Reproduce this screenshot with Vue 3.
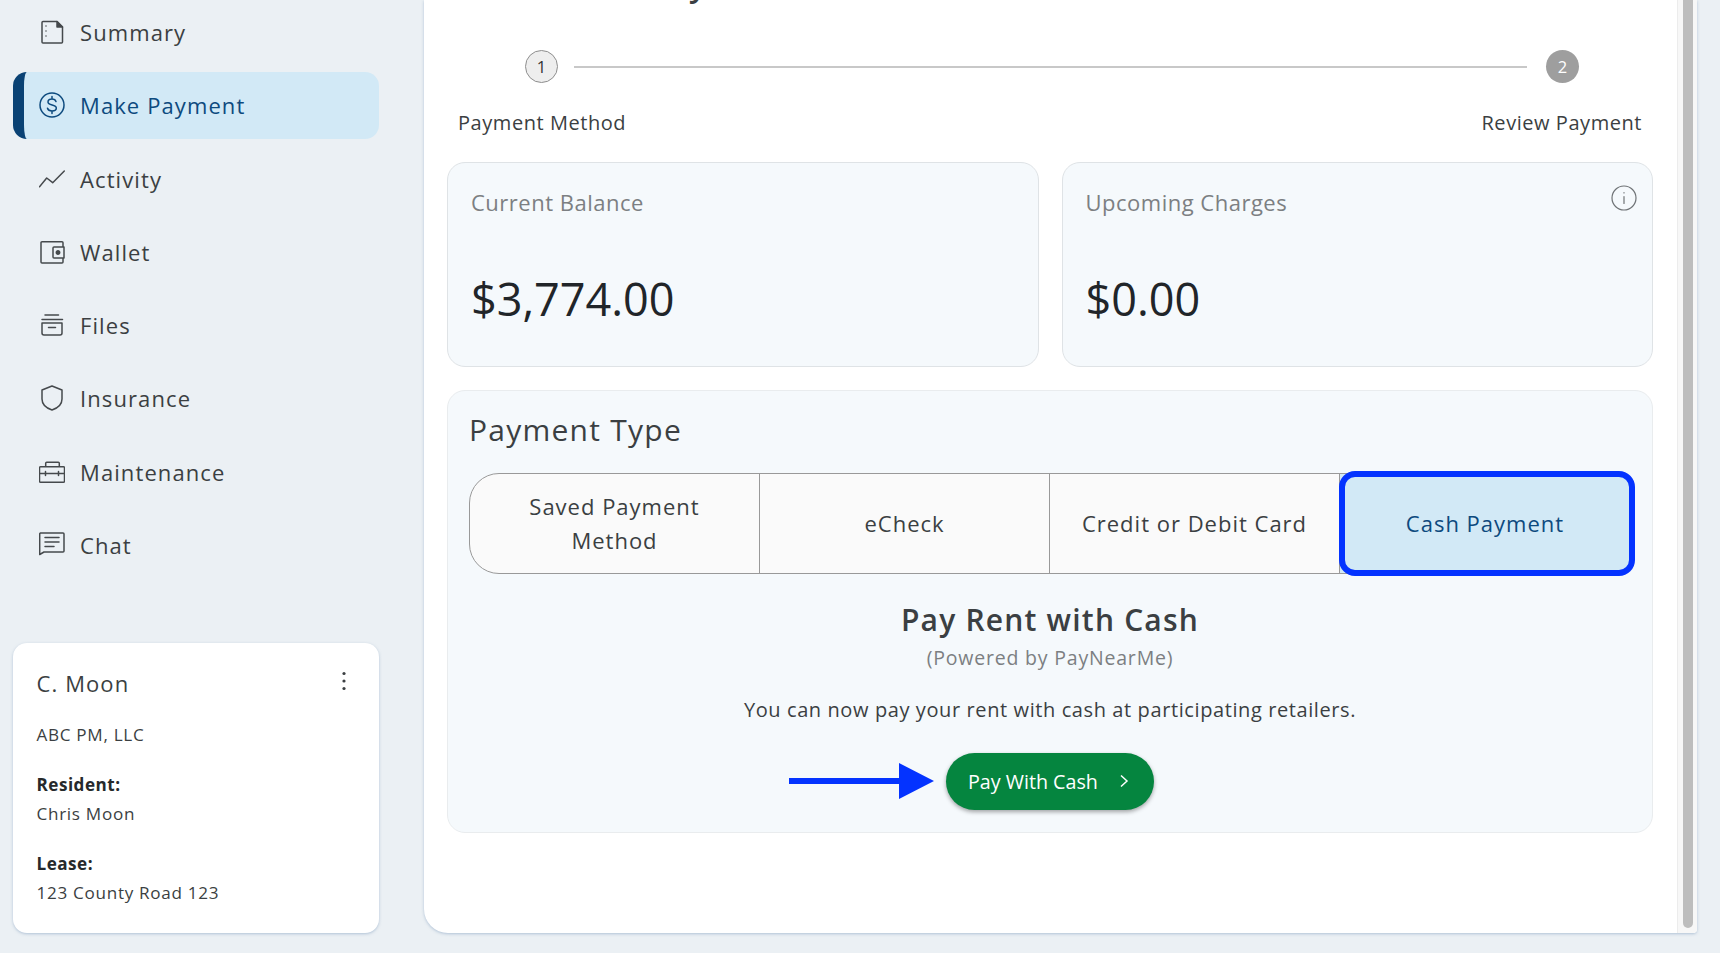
<script setup>
const navItems = [
  { label: 'Summary', fill: 'M18 2.5L23.5 8H18z', icon: 'M4 2.5H18L23.5 8V23a1 1 0 0 1-1 1H4a1 1 0 0 1-1-1V3.5a1 1 0 0 1 1-1zM7 7v.1M7 12v.1M7 17v.1' },
  { label: 'Make Payment', active: true, icon: 'M1 13a12 12 0 1 0 24 0a12 12 0 1 0-24 0M17 9.6C16.5 8 15 7 13 7c-2.5 0-4 1.3-4 3c0 4 8.3 2 8.3 6c0 1.8-1.8 3-4.3 3c-2.3 0-4-1-4.5-2.7M13 4.5V7M13 19v2.5' },
  { label: 'Activity', icon: 'M.5 20.7L7.7 12L13.7 16.7L25.3 5' },
  { label: 'Wallet', fill: 'M17.3 13.5a1.7 1.7 0 1 0 3.4 0a1.7 1.7 0 1 0-3.4 0z', icon: 'M24 8V3.7a1 1 0 0 0-1-1H3a1 1 0 0 0-1 1V23a1 1 0 0 0 1 1H23a1 1 0 0 0 1-1V19M25 8H15a1 1 0 0 0-1 1V18a1 1 0 0 0 1 1H25z' },
  { label: 'Files', icon: 'M6 3H19.5M3 7.5H23.5M3 11H23V21a2 2 0 0 1-2 2H5a2 2 0 0 1-2-2zM9.5 15.5H16.5' },
  { label: 'Insurance', icon: 'M13 1L23 5V14c0 5-4 9-10 11c-6-2-10-6-10-11V5z' },
  { label: 'Maintenance', icon: 'M1.5 7.7H24.5a1 1 0 0 1 1 1V22.3a1 1 0 0 1-1 1H1.5a1 1 0 0 1-1-1V8.7a1 1 0 0 1 1-1zM6.7 7.7V4.3a1 1 0 0 1 1-1H19.3a1 1 0 0 1 1 1V7.7M.5 14.5H25.5M6.5 12.5V16.5M19.5 12.5V16.5' },
  { label: 'Chat', icon: 'M1.5 1H24a1 1 0 0 1 1 1V19a1 1 0 0 1-1 1H5L.7 22.5V2A1 1 0 0 1 1.5 1zM6 5.5H20M6 10H20M6 14.5H15' }
]
const tabs = ['Saved Payment Method', 'eCheck', 'Credit or Debit Card', 'Cash Payment']
</script>

<template>
  <div class="page">
    <aside class="sidebar">
      <nav class="nav">
        <a v-for="item in navItems" :key="item.label" class="nav-item" :class="{ active: item.active }">
          <svg class="nav-icon" width="26" height="26" viewBox="0 0 26 26" fill="none" stroke="currentColor" stroke-width="1.5" stroke-linecap="round" stroke-linejoin="round">
            <path :d="item.icon" />
            <path v-if="item.fill" :d="item.fill" fill="currentColor" />
          </svg>
          <span>{{ item.label }}</span>
        </a>
      </nav>
      <section class="account">
        <div class="account-head">
          <span class="account-name">C. Moon</span>
          <svg class="dots" width="6" height="20" viewBox="0 0 6 20" fill="#3b3f42">
            <circle cx="3" cy="2.5" r="1.6" />
            <circle cx="3" cy="10" r="1.6" />
            <circle cx="3" cy="17.5" r="1.6" />
          </svg>
        </div>
        <p class="account-line company">ABC PM, LLC</p>
        <p class="account-label">Resident:</p>
        <p class="account-line">Chris Moon</p>
        <p class="account-label">Lease:</p>
        <p class="account-line">123 County Road 123</p>
      </section>
    </aside>

    <main class="main">
      <div class="content">
        <h1 class="title">Make Payment</h1>
        <div class="stepper-track">
          <span class="step-dot current">1</span>
          <span class="step-line"></span>
          <span class="step-dot next">2</span>
        </div>
        <div class="stepper-labels">
          <span>Payment Method</span>
          <span>Review Payment</span>
        </div>

        <div class="balances">
          <div class="balance">
            <div class="balance-label">Current Balance</div>
            <div class="balance-value">$3,774.00</div>
          </div>
          <div class="balance">
            <div class="balance-label">Upcoming Charges</div>
            <div class="balance-value">$0.00</div>
            <svg class="info" width="26" height="26" viewBox="0 0 26 26" fill="none" stroke="#6f7376" stroke-width="1.2" stroke-linecap="round">
              <circle cx="13" cy="13" r="12" />
              <path d="M13 11.5V18.5M13 7.6v.3" />
            </svg>
          </div>
        </div>

        <section class="payment">
          <h2 class="payment-title">Payment Type</h2>
          <div class="tabs">
            <button v-for="(tab, i) in tabs" :key="tab" class="tab" :class="{ selected: i === 3 }">{{ tab }}</button>
            <span class="highlight"></span>
          </div>
          <h3 class="cash-title">Pay Rent with Cash</h3>
          <p class="powered">(Powered by PayNearMe)</p>
          <p class="cash-text">You can now pay your rent with cash at participating retailers.</p>
          <div class="action">
            <button class="pay">
              <span>Pay With Cash</span>
              <svg width="12" height="16" viewBox="0 0 12 16" fill="none" stroke="#fff" stroke-width="1.5">
                <path d="M3 2.5L9 8L3 13.5" />
              </svg>
            </button>
            <svg class="arrow" width="145" height="36" viewBox="0 0 145 36" fill="#0433ff">
              <path d="M0 15H110V0L145 18L110 36V21H0z" />
            </svg>
          </div>
        </section>
      </div>
      <div class="scrollbar"><span class="thumb"></span></div>
    </main>
  </div>
</template>

<style>
html, body { margin: 0; padding: 0; overflow: hidden; }
</style>

<style scoped>
.page {
  display: flex;
  height: 953px;
  box-sizing: border-box;
  padding-bottom: 20px;
  background: #ebf0f4;
  font-family: "Open Sans", "Noto Sans", sans-serif;
  color: #3b3f42;
  overflow: hidden;
}
.sidebar {
  width: 424px;
  flex: none;
  box-sizing: border-box;
  padding: 0 45px 0 13px;
  display: flex;
  flex-direction: column;
}
.nav {
  margin-top: -1.5px;
  display: flex;
  flex-direction: column;
  gap: 6.3px;
}
.nav-item {
  height: 67px;
  display: flex;
  align-items: center;
  gap: 15px;
  padding-left: 26px;
  font-size: 22px;
  letter-spacing: 1.1px;
  color: #3b3f42;
  border-radius: 14px;
  box-sizing: border-box;
}
.nav-icon { flex: none; color: #45494c; }
.nav-item.active {
  background: #d2e9f6;
  color: #0d4a7e;
  border-left: 11px solid #0a4274;
  padding-left: 15px;
}
.nav-item.active .nav-icon { color: #0d4a7e; }
.account {
  margin-top: auto;
  height: 290px;
  box-sizing: border-box;
  background: #fff;
  border-radius: 14px;
  padding: 23px 23.5px 0;
  box-shadow: 0 1px 3px rgba(120, 150, 185, 0.5);
}
.account-head {
  display: flex;
  justify-content: space-between;
  align-items: flex-start;
  height: 35px;
}
.account-name { font-size: 22px; letter-spacing: 1.1px; line-height: 34px; }
.dots { margin: 5px 8.5px 0 0; }
.account-line {
  margin: 0;
  font-size: 17.1px;
  letter-spacing: 0.7px;
  line-height: 29px;
}
.company { margin-top: 18.5px; margin-bottom: 22.5px; }
.account-label {
  margin: 0;
  font-size: 17.1px;
  letter-spacing: 0.5px;
  font-weight: 700;
  line-height: 28px;
  color: #26292b;
}
.account-line + .account-label { margin-top: 21.5px; }
.company + .account-label { margin-top: 0; }

.main {
  flex: 1;
  min-width: 0;
  margin-right: 23px;
  display: flex;
  background: #fff;
  border-radius: 0 0 4px 24px;
  box-shadow: 0 1px 3px rgba(120, 150, 185, 0.5);
  overflow: hidden;
}
.content {
  flex: 1;
  min-width: 0;
  box-sizing: border-box;
  padding: 0 24px 0 23px;
  overflow: hidden;
}
.scrollbar {
  flex: none;
  width: 20px;
  box-sizing: border-box;
  padding: 0 4px 5px 5px;
  background: #f7f7f7;
  border-left: 1px solid #ececec;
  display: flex;
}
.thumb {
  width: 11px;
  background: #bdbdbd;
  border-radius: 0 0 6px 6px;
}
.title {
  margin: -36px 0 0;
  padding-left: 111px;
  height: 40px;
  font-size: 32px;
  line-height: 40px;
  font-weight: 600;
  color: #3b3f42;
  white-space: nowrap;
}
.stepper-track {
  margin-top: 45.5px;
  padding: 0 74px 0 78px;
  display: flex;
  align-items: center;
}
.step-dot {
  width: 33px;
  height: 33px;
  flex: none;
  box-sizing: border-box;
  border-radius: 50%;
  display: flex;
  align-items: center;
  justify-content: center;
  font-size: 16.5px;
}
.step-dot.current { background: #eeeeee; border: 1.5px solid #8e8e8e; color: #333; }
.step-dot.next { background: #9e9e9e; color: #fff; }
.step-line {
  flex: 1;
  height: 2px;
  margin: 2px 19px 0 16px;
  background: #c8c8c8;
}
.stepper-labels {
  margin-top: 25.5px;
  padding: 0 11px;
  display: flex;
  justify-content: space-between;
  font-size: 20px;
  line-height: 30px;
  letter-spacing: 0.55px;
  color: #3b3f42;
}
.balances {
  margin-top: 24px;
  display: grid;
  grid-template-columns: 1fr 1fr;
  gap: 23px;
}
.balance {
  position: relative;
  height: 205px;
  box-sizing: border-box;
  padding: 24px 23px 0;
  background: #f5f9fc;
  border: 1.5px solid #dfe3e6;
  border-radius: 18px;
}
.balance-label {
  font-size: 22px;
  line-height: 30px;
  letter-spacing: 0.5px;
  color: #7c7f82;
}
.balance-value {
  margin-top: 52px;
  font-size: 45px;
  line-height: 60px;
  color: #212529;
}
.info { position: absolute; top: 21.5px; right: 15px; }
.payment {
  margin-top: 23px;
  height: 442.5px;
  box-sizing: border-box;
  padding: 20px 21px 0;
  background: #f5f9fc;
  border: 1.5px solid #e9ecee;
  border-radius: 18px;
}
.payment-title {
  margin: -1px 0 0;
  font-size: 30px;
  line-height: 40px;
  font-weight: 400;
  letter-spacing: 1.25px;
  color: #3b3f42;
}
.tabs {
  position: relative;
  margin-top: 22.5px;
  display: grid;
  grid-template-columns: repeat(4, 1fr);
  height: 101px;
  border: 1.5px solid #999;
  border-radius: 30px 16px 16px 30px;
  box-sizing: border-box;
  background: #fafafa;
}
.tab {
  font: inherit;
  font-size: 22px;
  line-height: 34px;
  letter-spacing: 1px;
  color: #3b3f42;
  background: transparent;
  border: 0;
  border-right: 1.5px solid #999;
  padding: 0 30px;
}
.tab:first-child { border-radius: 29px 0 0 29px; }
.tab.selected {
  border-right: 0;
  background: #d2e9f6;
  color: #0d4a7e;
  border-radius: 0 15px 15px 0;
}
.highlight {
  position: absolute;
  left: 869px;
  right: -4.5px;
  top: -3px;
  bottom: -3.5px;
  border: 6.5px solid #0433ff;
  border-radius: 16px;
}
.cash-title {
  margin: 24px 0 0;
  text-align: center;
  font-size: 30px;
  line-height: 44px;
  font-weight: 600;
  letter-spacing: 1.2px;
  color: #3b3f42;
}
.powered {
  margin: 2.5px 0 0;
  text-align: center;
  font-size: 19.5px;
  line-height: 28px;
  letter-spacing: 0.8px;
  color: #7c7f82;
}
.cash-text {
  margin: 23px 0 0;
  text-align: center;
  font-size: 20px;
  line-height: 30px;
  letter-spacing: 0.6px;
  color: #3b3f42;
}
.action {
  position: relative;
  margin-top: 27.5px;
  display: flex;
  justify-content: center;
}
.pay {
  font: inherit;
  height: 57px;
  width: 208px;
  box-sizing: border-box;
  padding: 0 24px 0 22px;
  border: 0;
  border-radius: 28.5px;
  background: #05853f;
  color: #fff;
  font-size: 19.7px;
  display: flex;
  align-items: center;
  justify-content: space-between;
  box-shadow: 0 2px 4px rgba(0, 0, 0, 0.35);
}
.arrow { position: absolute; left: 319.5px; top: 10px; }
</style>
